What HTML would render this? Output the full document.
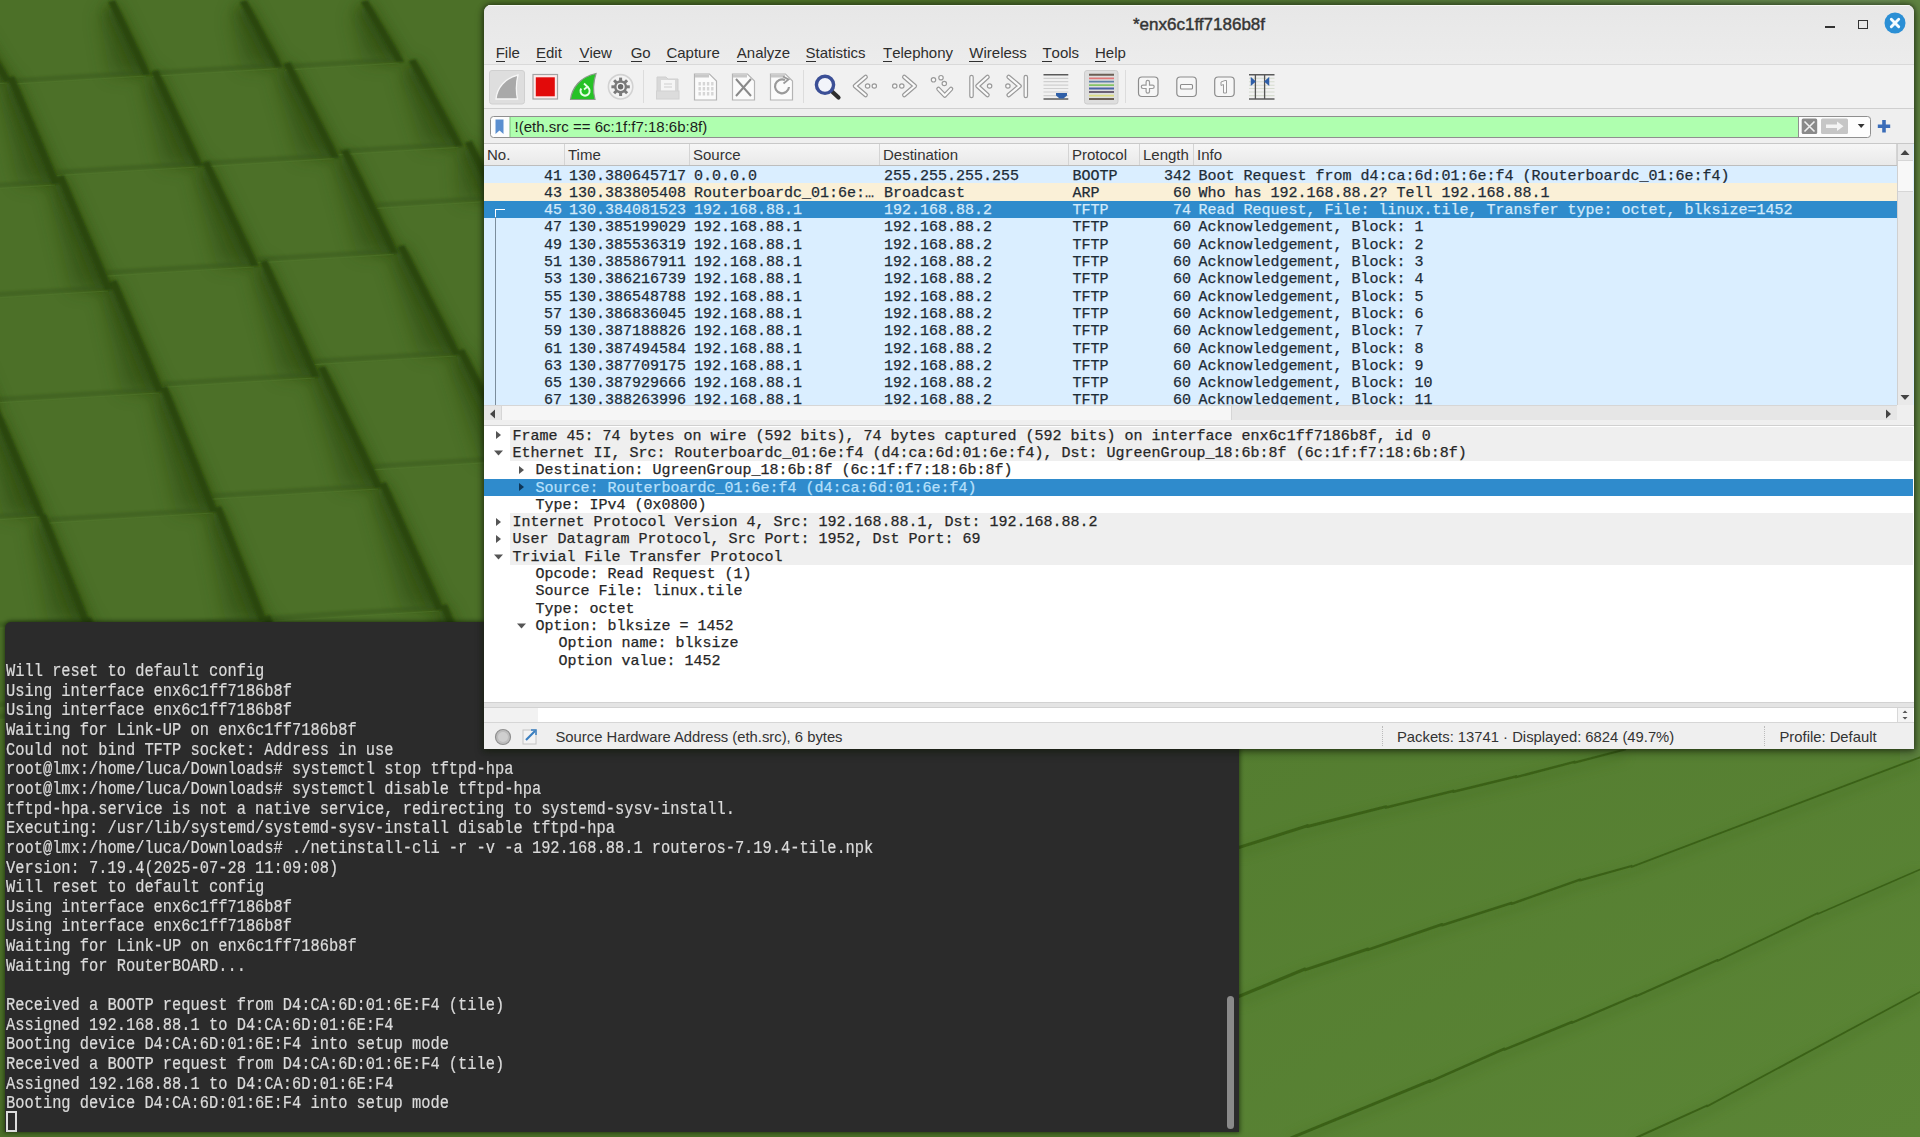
<!DOCTYPE html><html><head><meta charset="utf-8"><style>
*{box-sizing:border-box}
html,body{margin:0;padding:0;width:1920px;height:1137px;overflow:hidden;background:#4f7529;position:relative}
.abs{position:absolute}
.sans{font-family:"Liberation Sans",sans-serif}
.mono{font-family:"Liberation Mono",monospace}
#ws{position:absolute;z-index:5;left:484px;top:5px;width:1430px;height:744px;background:#efefef;border-radius:7px 7px 0 0;box-shadow:0 0 5px 1px rgba(25,32,15,.65),0 4px 10px rgba(10,20,0,.35);overflow:hidden}
#title{position:absolute;left:0;top:0;width:1430px;height:59px;background:linear-gradient(#e7e7e7,#ececec);box-shadow:inset 0 1px #f7f9f5}
#titletext{position:absolute;left:0;width:1430px;top:10px;text-align:center;font:17px "Liberation Sans",sans-serif;color:#353535;-webkit-text-stroke:0.45px #353535}
.menu{position:absolute;top:39px;font:15px "Liberation Sans",sans-serif;color:#2e2e2e;line-height:18px}
.menu u{text-decoration:none;display:inline-block;line-height:17px;border-bottom:1px solid #303030}
#toolbar{position:absolute;left:0;top:59px;width:1430px;height:45px;background:#f1f1f1;box-shadow:inset 0 1px #d9d9d9,inset 0 -1px #cfcfcf}
.tb{position:absolute;top:0}
#filterbar{position:absolute;left:0;top:104px;width:1430px;height:35px;background:#efefef}
#plist{position:absolute;left:0;top:138px;width:1430px;height:277px;background:#daeeff;border-top:1px solid #c8c8c8}
.hdr{position:absolute;top:0;height:22px;background:linear-gradient(#f6f6f6,#e9e9e9);border-bottom:1px solid #bdbdbd;font:15px "Liberation Sans",sans-serif;color:#333}
.hcol{position:absolute;top:0;height:21px;border-right:1px solid #d4d4d4;padding-left:3px;line-height:22px}
.row{position:absolute;left:0;width:1413px;height:17.3px;font:15px "Liberation Mono",monospace;-webkit-text-stroke:0.25px currentColor;color:#1c2a33;white-space:pre;line-height:17.3px}
.row span{position:absolute;top:1.5px}
#detail{position:absolute;left:0;top:420px;width:1430px;height:283px;background:#fff;border-top:1px solid #d0d0d0;box-shadow:0 -5px 0 #efefef}
.drow{position:absolute;left:0;width:1430px;height:17.3px;font:15px "Liberation Mono",monospace;-webkit-text-stroke:0.25px currentColor;color:#222;white-space:pre;line-height:17.3px}
#status{position:absolute;left:0;top:717px;width:1430px;height:27px;background:#efefef;border-top:1px solid #d6d6d6;font:14.8px "Liberation Sans",sans-serif;color:#333}
#term{position:absolute;left:5px;top:622px;width:1234px;height:510px;background:#2b2b2b;border-radius:6px 6px 0 0;box-shadow:0 0 4px 1px rgba(10,25,0,.6);overflow:hidden}
.tl{position:absolute;left:1px;height:19.64px;-webkit-text-stroke:0.2px currentColor;transform:scaleY(1.2);transform-origin:0 15.1px;font:15.39px "Liberation Mono",monospace;color:#dadada;white-space:pre;line-height:19.64px}
</style></head><body>
<svg class="abs" style="left:0;top:0" width="1920" height="1137">
<defs><filter id="bl6" x="-50%" y="-50%" width="200%" height="200%"><feGaussianBlur stdDeviation="6"/></filter><filter id="bl9" x="-50%" y="-50%" width="200%" height="200%"><feGaussianBlur stdDeviation="9"/></filter><filter id="bl2" x="-50%" y="-50%" width="200%" height="200%"><feGaussianBlur stdDeviation="1.2"/></filter><filter id="bl1" x="-50%" y="-50%" width="200%" height="200%"><feGaussianBlur stdDeviation="0.7"/></filter><linearGradient id="gr" x1="0" y1="0" x2="1" y2="1"><stop offset="0" stop-color="#547d30"/><stop offset="1" stop-color="#5b8536"/></linearGradient></defs>
<rect x="0" y="0" width="1920" height="1137" fill="#4c7028"/>
<rect x="1200" y="740" width="720" height="397" fill="url(#gr)"/>
<defs><linearGradient id="tg" x1="0" y1="0" x2="1" y2="0"><stop offset="0" stop-color="#4b6d28"/><stop offset="0.6" stop-color="#55783a"/><stop offset="1" stop-color="#6a8d56"/></linearGradient></defs>
<rect x="900" y="0" width="1020" height="8" fill="url(#tg)"/>
<rect x="1900" y="0" width="20" height="760" fill="#5e8240"/>
<g filter="url(#bl9)" fill="#2b4711" opacity="0.5">
<path d="M366.7 0 L403.3 62 L363.3 62 L352.7 16 Z"/>
<path d="M414.5 59 L462.4 146.4 L422.4 146.4 L400.5 75 Z"/>
<path d="M470.8 140.8 L500 200 L460 200 L456.8 156.8 Z"/>
<path d="M245.6 0 L282.2 67.6 L242.2 67.6 L231.6 16 Z"/>
<path d="M289.3 62 L338.5 157.7 L298.5 157.7 L275.3 78 Z"/>
<path d="M347 149.2 L397.7 253.4 L357.7 253.4 L333 165.2 Z"/>
<path d="M403.3 245 L460 355 L420 355 L389.3 261 Z"/>
<path d="M463 349 L520 460 L480 460 L449 365 Z"/>
<path d="M114 0 L150 75 L110 75 L100 16 Z"/>
<path d="M157 70 L202 166 L162 166 L143 86 Z"/>
<path d="M208 161 L258 266 L218 266 L194 177 Z"/>
<path d="M266 260 L319 377 L279 377 L252 276 Z"/>
<path d="M324 366 L382 488 L342 488 L310 382 Z"/>
<path d="M385 482 L443 610 L403 610 L371 498 Z"/>
<path d="M446 604 L480 690 L440 690 L432 620 Z"/>
<path d="M-20 30 L11 82 L-29 82 L-34 46 Z"/>
<path d="M13 76 L59 184 L19 184 L-1 92 Z"/>
<path d="M62.6 175 L112 290 L72 290 L48.6 191 Z"/>
<path d="M115.4 280 L163 392 L123 392 L101.4 296 Z"/>
<path d="M166 386 L217 512 L177 512 L152 402 Z"/>
<path d="M220 506 L266 621 L226 621 L206 522 Z"/>
<path d="M269 615 L300 690 L260 690 L255 631 Z"/>
<path d="M-30 340 L0 413 L-40 413 L-44 356 Z"/>
<path d="M0 413 L44 516 L4 516 L-14 429 Z"/>
<path d="M45 514 L89 622 L49 622 L31 530 Z"/>
<path d="M90 617 L120 700 L80 700 L76 633 Z"/>
</g>
<g filter="url(#bl6)" fill="#2a4610" opacity="0.75">
<path d="M366.7 4 L403.3 60 L387.3 60 L358.7 10 Z"/>
<path d="M414.5 63 L462.4 144.4 L446.4 144.4 L406.5 69 Z"/>
<path d="M470.8 144.8 L500 198 L484 198 L462.8 150.8 Z"/>
<path d="M245.6 4 L282.2 65.6 L266.2 65.6 L237.6 10 Z"/>
<path d="M289.3 66 L338.5 155.7 L322.5 155.7 L281.3 72 Z"/>
<path d="M347 153.2 L397.7 251.4 L381.7 251.4 L339 159.2 Z"/>
<path d="M403.3 249 L460 353 L444 353 L395.3 255 Z"/>
<path d="M463 353 L520 458 L504 458 L455 359 Z"/>
<path d="M114 4 L150 73 L134 73 L106 10 Z"/>
<path d="M157 74 L202 164 L186 164 L149 80 Z"/>
<path d="M208 165 L258 264 L242 264 L200 171 Z"/>
<path d="M266 264 L319 375 L303 375 L258 270 Z"/>
<path d="M324 370 L382 486 L366 486 L316 376 Z"/>
<path d="M385 486 L443 608 L427 608 L377 492 Z"/>
<path d="M446 608 L480 688 L464 688 L438 614 Z"/>
<path d="M-20 34 L11 80 L-5 80 L-28 40 Z"/>
<path d="M13 80 L59 182 L43 182 L5 86 Z"/>
<path d="M62.6 179 L112 288 L96 288 L54.6 185 Z"/>
<path d="M115.4 284 L163 390 L147 390 L107.4 290 Z"/>
<path d="M166 390 L217 510 L201 510 L158 396 Z"/>
<path d="M220 510 L266 619 L250 619 L212 516 Z"/>
<path d="M269 619 L300 688 L284 688 L261 625 Z"/>
<path d="M-30 344 L0 411 L-16 411 L-38 350 Z"/>
<path d="M0 417 L44 514 L28 514 L-8 423 Z"/>
<path d="M45 518 L89 620 L73 620 L37 524 Z"/>
<path d="M90 621 L120 698 L104 698 L82 627 Z"/>
</g>
<g filter="url(#bl2)" fill="#2e4c13" opacity="0.3">
<path d="M399.3 62 L284.87514792899407 69.1 L284.87514792899407 64.1 L399.3 57 Z"/>
<path d="M458.4 146.4 L338.2611285266458 153.8 L338.2611285266458 148.8 L458.4 141.4 Z"/>
<path d="M496 200 L377.1502879078695 207.4 L377.1502879078695 202.4 L496 195 Z"/>
<path d="M278.2 67.6 L151.848 75.4 L151.848 70.4 L278.2 62.599999999999994 Z"/>
<path d="M334.5 157.7 L203.453125 165.8 L203.453125 160.8 L334.5 152.7 Z"/>
<path d="M393.7 253.4 L257.3809523809524 261.8 L257.3809523809524 256.8 L393.7 248.4 Z"/>
<path d="M456 355 L314.2991452991453 363.7 L314.2991452991453 358.7 L456 350 Z"/>
<path d="M516 460 L374.0655737704918 468.8 L374.0655737704918 463.8 L516 455 Z"/>
<path d="M146 75 L12.80769230769232 83.2 L12.80769230769232 78.2 L146 70 Z"/>
<path d="M198 166 L56.46296296296296 174.7 L56.46296296296296 169.7 L198 161 Z"/>
<path d="M254 266 L106.8382608695652 275.1 L106.8382608695652 270.1 L254 261 Z"/>
<path d="M315 377 L161.75 386.4 L161.75 381.4 L315 372 Z"/>
<path d="M378 488 L212.3095238095238 498.2 L212.3095238095238 493.2 L378 483 Z"/>
<path d="M439 610 L266.6 620.6 L266.6 615.6 L439 605 Z"/>
<path d="M476 690 L-17 719.8 L-17 714.8 L476 685 Z"/>
<path d="M7 82 L-17 83.7 L-17 78.7 L7 77 Z"/>
<path d="M55 184 L-17 188.6 L-17 183.6 L55 179 Z"/>
<path d="M108 290 L-17 297.7 L-17 292.7 L108 285 Z"/>
<path d="M159 392 L-3.5753424657534367 402.0 L-3.5753424657534367 397.0 L159 387 Z"/>
<path d="M213 512 L49.22222222222223 522.1 L49.22222222222223 517.1 L213 507 Z"/>
<path d="M262 621 L96.25301204819277 631.2 L96.25301204819277 626.2 L262 616 Z"/>
<path d="M296 690 L121.19277108433735 700.7 L121.19277108433735 695.7 L296 685 Z"/>
<path d="M-4 413 L-17 414.0 L-17 409.0 L-4 408 Z"/>
<path d="M40 516 L-17 519.7 L-17 514.7 L40 511 Z"/>
<path d="M85 622 L-17 628.4 L-17 623.4 L85 617 Z"/>
<path d="M116 700 L-17 708.2 L-17 703.2 L116 695 Z"/>
</g>
<g filter="url(#bl1)" stroke="#557b31" stroke-width="1.2" fill="none" opacity="0.45">
<path d="M399.3 63 L284.87514792899407 70.1"/>
<path d="M458.4 147.4 L338.2611285266458 154.8"/>
<path d="M496 201 L377.1502879078695 208.4"/>
<path d="M278.2 68.6 L151.848 76.4"/>
<path d="M334.5 158.7 L203.453125 166.8"/>
<path d="M393.7 254.4 L257.3809523809524 262.8"/>
<path d="M456 356 L314.2991452991453 364.7"/>
<path d="M516 461 L374.0655737704918 469.8"/>
<path d="M146 76 L12.80769230769232 84.2"/>
<path d="M198 167 L56.46296296296296 175.7"/>
<path d="M254 267 L106.8382608695652 276.1"/>
<path d="M315 378 L161.75 387.4"/>
<path d="M378 489 L212.3095238095238 499.2"/>
<path d="M439 611 L266.6 621.6"/>
<path d="M476 691 L-17 720.8"/>
<path d="M7 83 L-17 84.7"/>
<path d="M55 185 L-17 189.6"/>
<path d="M108 291 L-17 298.7"/>
<path d="M159 393 L-3.5753424657534367 403.0"/>
<path d="M213 513 L49.22222222222223 523.1"/>
<path d="M262 622 L96.25301204819277 632.2"/>
<path d="M296 691 L121.19277108433735 701.7"/>
<path d="M-4 414 L-17 415.0"/>
<path d="M40 517 L-17 520.7"/>
<path d="M85 623 L-17 629.4"/>
<path d="M116 701 L-17 709.2"/>
</g>
<g filter="url(#bl2)" fill="#294710">
<path d="M367.7 0 L404.3 62 L396.3 62 L360.7 2 Z"/>
<path d="M415.5 59 L463.4 146.4 L455.4 146.4 L408.5 61 Z"/>
<path d="M471.8 140.8 L501 200 L493 200 L464.8 142.8 Z"/>
<path d="M246.6 0 L283.2 67.6 L275.2 67.6 L239.6 2 Z"/>
<path d="M290.3 62 L339.5 157.7 L331.5 157.7 L283.3 64 Z"/>
<path d="M348 149.2 L398.7 253.4 L390.7 253.4 L341 151.2 Z"/>
<path d="M404.3 245 L461 355 L453 355 L397.3 247 Z"/>
<path d="M464 349 L521 460 L513 460 L457 351 Z"/>
<path d="M115 0 L151 75 L143 75 L108 2 Z"/>
<path d="M158 70 L203 166 L195 166 L151 72 Z"/>
<path d="M209 161 L259 266 L251 266 L202 163 Z"/>
<path d="M267 260 L320 377 L312 377 L260 262 Z"/>
<path d="M325 366 L383 488 L375 488 L318 368 Z"/>
<path d="M386 482 L444 610 L436 610 L379 484 Z"/>
<path d="M447 604 L481 690 L473 690 L440 606 Z"/>
<path d="M-19 30 L12 82 L4 82 L-26 32 Z"/>
<path d="M14 76 L60 184 L52 184 L7 78 Z"/>
<path d="M63.6 175 L113 290 L105 290 L56.6 177 Z"/>
<path d="M116.4 280 L164 392 L156 392 L109.4 282 Z"/>
<path d="M167 386 L218 512 L210 512 L160 388 Z"/>
<path d="M221 506 L267 621 L259 621 L214 508 Z"/>
<path d="M270 615 L301 690 L293 690 L263 617 Z"/>
<path d="M-29 340 L1 413 L-7 413 L-36 342 Z"/>
<path d="M1 413 L45 516 L37 516 L-6 415 Z"/>
<path d="M46 514 L90 622 L82 622 L39 516 Z"/>
<path d="M91 617 L121 700 L113 700 L84 619 Z"/>
</g>
<g filter="url(#bl6)" stroke="#3f6a1f" stroke-width="8" fill="none" opacity="0.35">
<polyline points="1238,852 1307.5,830.7 1386,811.7 1453.3,796 1516,781.4 1574.4,766.8 1625,754.5"/>
<polyline points="1238,1001 1305,974 1368,954 1442,929.4 1511.6,908 1580,884.6 1631.6,871 1920,762.3"/>
<polyline points="1291,1142 1430,1085.8 1504.4,1053.8 1572,1027 1636,1000.5 1717.6,965 1817.7,918.2 1920,874.5"/>
<polyline points="1636,1142 1707,1110.6 1920,997"/>
</g>
<g filter="url(#bl1)" stroke="#3a6118" fill="none" stroke-linecap="round">
<path d="M1238 847.8 L1307.5 825.7" stroke-width="3.11"/>
<path d="M1307.5 826.5 L1386 806.7" stroke-width="2.93"/>
<path d="M1386 807.5 L1453.3 791" stroke-width="2.75"/>
<path d="M1453.3 791.8 L1516 776.4" stroke-width="2.59"/>
<path d="M1516 777.1999999999999 L1574.4 761.8" stroke-width="2.43"/>
<path d="M1574.4 762.5999999999999 L1625 749.5" stroke-width="2.30"/>
<path d="M1238 996.8 L1305 969" stroke-width="3.12"/>
<path d="M1305 969.8 L1368 949" stroke-width="2.95"/>
<path d="M1368 949.8 L1442 924.4" stroke-width="2.78"/>
<path d="M1442 925.1999999999999 L1511.6 903" stroke-width="2.60"/>
<path d="M1511.6 903.8 L1580 879.6" stroke-width="2.43"/>
<path d="M1580 880.4 L1631.6 866" stroke-width="2.28"/>
<path d="M1631.6 866.8 L1920 757.3" stroke-width="1.86"/>
<path d="M1291 1137.8 L1430 1080.8" stroke-width="2.89"/>
<path d="M1430 1081.6 L1504.4 1048.8" stroke-width="2.63"/>
<path d="M1504.4 1049.6 L1572 1022" stroke-width="2.45"/>
<path d="M1572 1022.8 L1636 995.5" stroke-width="2.29"/>
<path d="M1636 996.3 L1717.6 960" stroke-width="2.11"/>
<path d="M1717.6 960.8 L1817.7 913.2" stroke-width="1.88"/>
<path d="M1817.7 914.0 L1920 869.5" stroke-width="1.63"/>
<path d="M1636 1137.8 L1707 1105.6" stroke-width="2.12"/>
<path d="M1707 1106.3999999999999 L1920 992" stroke-width="1.77"/>
</g>
</svg>
<div id="ws">
<div id="title"><div id="titletext">*enx6c1ff7186b8f</div>
<div class="abs" style="left:1341px;top:21px;width:10px;height:2px;background:#333"></div>
<div class="abs" style="left:1374px;top:14.5px;width:9.5px;height:9.5px;border:1.8px solid #333"></div>
<svg class="abs" style="left:1400px;top:7px" width="22" height="22"><circle cx="11" cy="11" r="10.5" fill="#2b8fd5"/><path d="M7.3 7.3L14.7 14.7M14.7 7.3L7.3 14.7" stroke="#f4fbff" stroke-width="2.9" stroke-linecap="round"/></svg>
<div class="menu" style="left:11.7px"><u>F</u>ile</div>
<div class="menu" style="left:52.0px"><u>E</u>dit</div>
<div class="menu" style="left:95.4px"><u>V</u>iew</div>
<div class="menu" style="left:146.7px"><u>G</u>o</div>
<div class="menu" style="left:182.4px"><u>C</u>apture</div>
<div class="menu" style="left:252.8px"><u>A</u>nalyze</div>
<div class="menu" style="left:321.5px"><u>S</u>tatistics</div>
<div class="menu" style="left:399.0px"><u>T</u>elephony</div>
<div class="menu" style="left:485.3px"><u>W</u>ireless</div>
<div class="menu" style="left:558.4px"><u>T</u>ools</div>
<div class="menu" style="left:611.0px"><u>H</u>elp</div>
</div>
<div id="toolbar"><svg class="abs" style="left:0;top:0" width="1430" height="45"><g transform="translate(-484,-64)">
<rect x="489.5" y="70.5" width="35" height="33.5" rx="2.5" fill="#dedede" stroke="#d0d0d0"/>
<path d="M496 99 C497 88 505 78 518 75 C516 83 516 92 517.5 99 Z" fill="#a9a9a9" stroke="#f6f6f6" stroke-width="1.3"/>
<rect x="533" y="74.5" width="24.5" height="24.5" fill="#fbeaea" stroke="#a3a3a3" stroke-width="1.2"/>
<rect x="535.8" y="77.3" width="19" height="19" fill="#e20a0a"/>
<path d="M570.5 99.5 C572 88 580 77 596 73.5 C593 83 593 92 595 99.5 Z" fill="#26c226" stroke="#8a9a8a" stroke-width="1.2"/>
<path d="M581.2 88.5 A4.6 4.6 0 1 0 586 86.5" fill="none" stroke="#e8ffe8" stroke-width="2"/>
<path d="M584 83.5 L587.5 86.8 L584 89.5" fill="none" stroke="#e8ffe8" stroke-width="1.8"/>
<circle cx="620.6" cy="86.8" r="12.2" fill="#f3f3f3" stroke="#d2d2d2" stroke-width="1.6"/>
<rect x="619.1" y="77.6" width="3" height="4" fill="#7a7a7a" transform="rotate(0 620.6 86.8)"/>
<rect x="619.1" y="77.6" width="3" height="4" fill="#7a7a7a" transform="rotate(45 620.6 86.8)"/>
<rect x="619.1" y="77.6" width="3" height="4" fill="#7a7a7a" transform="rotate(90 620.6 86.8)"/>
<rect x="619.1" y="77.6" width="3" height="4" fill="#7a7a7a" transform="rotate(135 620.6 86.8)"/>
<rect x="619.1" y="77.6" width="3" height="4" fill="#7a7a7a" transform="rotate(180 620.6 86.8)"/>
<rect x="619.1" y="77.6" width="3" height="4" fill="#7a7a7a" transform="rotate(225 620.6 86.8)"/>
<rect x="619.1" y="77.6" width="3" height="4" fill="#7a7a7a" transform="rotate(270 620.6 86.8)"/>
<rect x="619.1" y="77.6" width="3" height="4" fill="#7a7a7a" transform="rotate(315 620.6 86.8)"/>
<circle cx="620.6" cy="86.8" r="6.6" fill="#7a7a7a"/>
<circle cx="620.6" cy="86.8" r="4.1" fill="#f3f3f3"/>
<circle cx="620.6" cy="86.8" r="2.7" fill="#6a6a6a"/>
<line x1="643.5" y1="70" x2="643.5" y2="103" stroke="#dcdcdc" stroke-width="1"/>
<line x1="803.5" y1="70" x2="803.5" y2="103" stroke="#dcdcdc" stroke-width="1"/>
<line x1="1125.5" y1="70" x2="1125.5" y2="103" stroke="#dcdcdc" stroke-width="1"/>
<path d="M657 77 L666 77 L668 79 L678 79 L678 98 L657 98 Z" fill="#d8d8d8" stroke="#cfcfcf"/>
<rect x="661" y="80" width="14" height="11" fill="#f5f5f5"/>
<line x1="664" y1="84" x2="672" y2="84" stroke="#cfcfcf" stroke-width="1.2"/><line x1="664" y1="87" x2="672" y2="87" stroke="#cfcfcf" stroke-width="1.2"/>
<rect x="656.5" y="91" width="22.5" height="8" fill="#dcdcdc" stroke="#d2d2d2"/>
<path d="M694.5 74 L709.5 74 L716.5 81 L716.5 100 L694.5 100 Z" fill="#fbfbfb" stroke="#b4b4b4" stroke-width="1.2"/><rect x="695" y="74.5" width="14" height="3" fill="#c8c8c8"/>
<rect x="698.5" y="82" width="2.4" height="3.5" fill="#d6d6d6"/>
<rect x="698.5" y="87" width="2.4" height="3.5" fill="#d6d6d6"/>
<rect x="698.5" y="92" width="2.4" height="3.5" fill="#d6d6d6"/>
<rect x="702.7" y="82" width="2.4" height="3.5" fill="#d6d6d6"/>
<rect x="702.7" y="87" width="2.4" height="3.5" fill="#d6d6d6"/>
<rect x="702.7" y="92" width="2.4" height="3.5" fill="#d6d6d6"/>
<rect x="706.9" y="82" width="2.4" height="3.5" fill="#d6d6d6"/>
<rect x="706.9" y="87" width="2.4" height="3.5" fill="#d6d6d6"/>
<rect x="706.9" y="92" width="2.4" height="3.5" fill="#d6d6d6"/>
<rect x="711.1" y="82" width="2.4" height="3.5" fill="#d6d6d6"/>
<rect x="711.1" y="87" width="2.4" height="3.5" fill="#d6d6d6"/>
<rect x="711.1" y="92" width="2.4" height="3.5" fill="#d6d6d6"/>
<path d="M732.5 74 L747.5 74 L754.5 81 L754.5 100 L732.5 100 Z" fill="#fbfbfb" stroke="#b4b4b4" stroke-width="1.2"/><rect x="733" y="74.5" width="14" height="3" fill="#c8c8c8"/>
<path d="M736 79 L751 96 M751 79 L736 96" stroke="#8a8a8a" stroke-width="2"/>
<path d="M770.5 74 L785.5 74 L792.5 81 L792.5 100 L770.5 100 Z" fill="#fbfbfb" stroke="#b4b4b4" stroke-width="1.2"/><rect x="771" y="74.5" width="14" height="3" fill="#c8c8c8"/>
<path d="M789 87 A7 7 0 1 1 785 80" fill="none" stroke="#9a9a9a" stroke-width="2.2"/>
<path d="M783 76.5 L788.5 79.5 L783.5 83.5" fill="none" stroke="#9a9a9a" stroke-width="1.8"/>
<line x1="832" y1="91.5" x2="838.5" y2="97.5" stroke="#2e2e2e" stroke-width="4.2" stroke-linecap="round"/>
<circle cx="825" cy="84.8" r="8.6" fill="#f2f4fa" stroke="#3b4f96" stroke-width="3.4"/>
<path d="M865.6 77 L855 86 L865.6 95" fill="none" stroke="#9a9a9a" stroke-width="4.6" stroke-linecap="round" stroke-linejoin="round"/><path d="M865.6 77 L855 86 L865.6 95" fill="none" stroke="#fafafa" stroke-width="2.2" stroke-linecap="round" stroke-linejoin="round"/><circle cx="867.6" cy="86" r="2.2" fill="#fafafa" stroke="#9a9a9a" stroke-width="1.2"/><circle cx="874.3" cy="86" r="2.2" fill="#fafafa" stroke="#9a9a9a" stroke-width="1.2"/>
<path d="M904.3 77 L914.8 86 L904.3 95" fill="none" stroke="#9a9a9a" stroke-width="4.6" stroke-linecap="round" stroke-linejoin="round"/><path d="M904.3 77 L914.8 86 L904.3 95" fill="none" stroke="#fafafa" stroke-width="2.2" stroke-linecap="round" stroke-linejoin="round"/><circle cx="894.75" cy="86" r="2.2" fill="#fafafa" stroke="#9a9a9a" stroke-width="1.2"/><circle cx="901.8" cy="86" r="2.2" fill="#fafafa" stroke="#9a9a9a" stroke-width="1.2"/>
<circle cx="933.5" cy="79.8" r="2.2" fill="#fafafa" stroke="#9a9a9a" stroke-width="1.2"/><circle cx="941" cy="77.7" r="2.2" fill="#fafafa" stroke="#9a9a9a" stroke-width="1.2"/><circle cx="944.3" cy="83.5" r="2.2" fill="#fafafa" stroke="#9a9a9a" stroke-width="1.2"/><path d="M938.5 89 L944.75 95.5 L951 89" fill="none" stroke="#9a9a9a" stroke-width="4.6" stroke-linecap="round" stroke-linejoin="round"/><path d="M938.5 89 L944.75 95.5 L951 89" fill="none" stroke="#fafafa" stroke-width="2.2" stroke-linecap="round" stroke-linejoin="round"/>
<path d="M971.5 77 L971.5 96" fill="none" stroke="#9a9a9a" stroke-width="4.6" stroke-linecap="round" stroke-linejoin="round"/><path d="M971.5 77 L971.5 96" fill="none" stroke="#fafafa" stroke-width="2.2" stroke-linecap="round" stroke-linejoin="round"/><path d="M987.5 77 L977.5 86 L987.5 95" fill="none" stroke="#9a9a9a" stroke-width="4.6" stroke-linecap="round" stroke-linejoin="round"/><path d="M987.5 77 L977.5 86 L987.5 95" fill="none" stroke="#fafafa" stroke-width="2.2" stroke-linecap="round" stroke-linejoin="round"/><circle cx="989.6" cy="86" r="2.2" fill="#fafafa" stroke="#9a9a9a" stroke-width="1.2"/>
<path d="M1008.75 77 L1019.5 86 L1008.75 95" fill="none" stroke="#9a9a9a" stroke-width="4.6" stroke-linecap="round" stroke-linejoin="round"/><path d="M1008.75 77 L1019.5 86 L1008.75 95" fill="none" stroke="#fafafa" stroke-width="2.2" stroke-linecap="round" stroke-linejoin="round"/><path d="M1025.8 77 L1025.8 96" fill="none" stroke="#9a9a9a" stroke-width="4.6" stroke-linecap="round" stroke-linejoin="round"/><path d="M1025.8 77 L1025.8 96" fill="none" stroke="#fafafa" stroke-width="2.2" stroke-linecap="round" stroke-linejoin="round"/><circle cx="1007.9" cy="86" r="2.2" fill="#fafafa" stroke="#9a9a9a" stroke-width="1.2"/>
<line x1="1043.5" y1="74.75" x2="1068.3" y2="74.75" stroke="#5a5a5a" stroke-width="1.6"/>
<line x1="1043.5" y1="78.3" x2="1068.3" y2="78.3" stroke="#cfcfcf" stroke-width="1.2"/>
<line x1="1043.5" y1="81.7" x2="1068.3" y2="81.7" stroke="#cfcfcf" stroke-width="1.2"/>
<line x1="1043.5" y1="85.2" x2="1068.3" y2="85.2" stroke="#cfcfcf" stroke-width="1.2"/>
<line x1="1043.5" y1="88.5" x2="1068.3" y2="88.5" stroke="#cfcfcf" stroke-width="1.2"/>
<line x1="1043.5" y1="92" x2="1068.3" y2="92" stroke="#cfcfcf" stroke-width="1.2"/>
<line x1="1043.5" y1="95.6" x2="1068.3" y2="95.6" stroke="#cfcfcf" stroke-width="1.2"/>
<line x1="1043.5" y1="99" x2="1068.3" y2="99" stroke="#5a5a5a" stroke-width="1.6"/>
<path d="M1056 93 L1067 93 L1067 95.5 L1063.5 98.5 L1059.5 98.5 L1056 95.5 Z" fill="#2f5fa8"/>
<rect x="1084.5" y="70.5" width="33.5" height="33.5" rx="2.5" fill="#dedede" stroke="#cdcdcd"/>
<line x1="1089" y1="74.75" x2="1114" y2="74.75" stroke="#6b5f55" stroke-width="1.8"/>
<line x1="1089" y1="78.3" x2="1114" y2="78.3" stroke="#e07878" stroke-width="1.8"/>
<line x1="1089" y1="81.7" x2="1114" y2="81.7" stroke="#5f80a8" stroke-width="1.8"/>
<line x1="1089" y1="85.2" x2="1114" y2="85.2" stroke="#86c466" stroke-width="1.8"/>
<line x1="1089" y1="88.5" x2="1114" y2="88.5" stroke="#4a62a6" stroke-width="1.8"/>
<line x1="1089" y1="92" x2="1114" y2="92" stroke="#6b6072" stroke-width="1.8"/>
<line x1="1089" y1="95.6" x2="1114" y2="95.6" stroke="#dcdc80" stroke-width="1.8"/>
<line x1="1089" y1="99" x2="1114" y2="99" stroke="#6b5f55" stroke-width="1.8"/>
<rect x="1138.5" y="77" width="19.5" height="19.5" rx="3.5" fill="#f6f6f6" stroke="#8c8c8c" stroke-width="1.2"/>
<path d="M1147.8 82 L1147.8 91.5 M1143 86.8 L1152.5 86.8" fill="none" stroke="#9a9a9a" stroke-width="4.6" stroke-linecap="round" stroke-linejoin="round"/><path d="M1147.8 82 L1147.8 91.5 M1143 86.8 L1152.5 86.8" fill="none" stroke="#fafafa" stroke-width="2.2" stroke-linecap="round" stroke-linejoin="round"/>
<rect x="1176.8" y="77" width="19.5" height="19.5" rx="3.5" fill="#f6f6f6" stroke="#8c8c8c" stroke-width="1.2"/>
<rect x="1180.5" y="84.5" width="12" height="4.5" rx="1" fill="#fafafa" stroke="#8c8c8c" stroke-width="1.1"/>
<rect x="1214.7" y="77" width="19.5" height="19.5" rx="3.5" fill="#f6f6f6" stroke="#8c8c8c" stroke-width="1.2"/>
<path d="M1221 82 L1225 80.5 L1226.5 80.5 L1226.5 93 L1223.5 93 L1223.5 84.5 L1221 85.5 Z" fill="#fafafa" stroke="#9a9a9a" stroke-width="1"/>
<line x1="1249" y1="74.75" x2="1274.5" y2="74.75" stroke="#5a5a5a" stroke-width="1.6"/>
<line x1="1249" y1="78.3" x2="1274.5" y2="78.3" stroke="#d6dccf" stroke-width="1.1"/>
<line x1="1249" y1="81.7" x2="1274.5" y2="81.7" stroke="#d6dccf" stroke-width="1.1"/>
<line x1="1249" y1="85.2" x2="1274.5" y2="85.2" stroke="#d6dccf" stroke-width="1.1"/>
<line x1="1249" y1="88.5" x2="1274.5" y2="88.5" stroke="#d6dccf" stroke-width="1.1"/>
<line x1="1249" y1="92" x2="1274.5" y2="92" stroke="#d6dccf" stroke-width="1.1"/>
<line x1="1249" y1="95.6" x2="1274.5" y2="95.6" stroke="#d6dccf" stroke-width="1.1"/>
<line x1="1249" y1="99" x2="1274.5" y2="99" stroke="#5a5a5a" stroke-width="1.6"/>
<line x1="1255.4" y1="75" x2="1255.4" y2="99" stroke="#555" stroke-width="1.3"/><line x1="1264.6" y1="75" x2="1264.6" y2="99" stroke="#555" stroke-width="1.3"/>
<path d="M1251.5 78.5 L1254.8 81.4 L1251.5 84.3 Z M1268.5 78.5 L1265.2 81.4 L1268.5 84.3 Z" fill="#2f5fa8" stroke="#2f5fa8" stroke-width="1.5"/>
</g></svg></div>
<div id="filterbar"><svg class="abs" style="left:0;top:0" width="1430" height="35"><g transform="translate(-484,-109)">
<rect x="490.5" y="116.5" width="1380" height="21" rx="3" fill="#fdfdfd" stroke="#8f8f8f"/>
<rect x="510" y="117" width="1288.5" height="20" fill="#afffaf"/>
<line x1="510" y1="117" x2="510" y2="137" stroke="#7fbf7f"/>
<line x1="1798.5" y1="117" x2="1798.5" y2="137" stroke="#8f8f8f"/>
<path d="M495.5 119.5 L503.5 119.5 L503.5 134 L499.5 130.5 L495.5 134 Z" fill="#5b8fd0"/>
<rect x="1801.7" y="118.6" width="15.5" height="15.4" rx="1.5" fill="#8a8a8a"/>
<path d="M1804.5 121.5 L1814.5 131.5 M1814.5 121.5 L1804.5 131.5" stroke="#f0f0f0" stroke-width="1.6"/>
<rect x="1821" y="118.6" width="27" height="15.4" rx="1.5" fill="#c6c6c6"/>
<path d="M1826 124.5 L1837 124.5 L1837 121.5 L1843.5 126.3 L1837 131 L1837 128 L1826 128 Z" fill="#f4f4f4"/>
<path d="M1857.8 124 L1864.6 124 L1861.2 128 Z" fill="#333"/>
<path d="M1884 120 L1884 132.5 M1877.8 126.2 L1890.2 126.2" stroke="#3a6cb8" stroke-width="3.6"/>
</g></svg>
<div class="abs" style="left:30.6px;top:8.5px;font:15px 'Liberation Sans',sans-serif;color:#1c1c1c;white-space:nowrap">!(eth.src == 6c:1f:f7:18:6b:8f)</div></div>
<div id="plist"><div class="hdr" style="left:0;width:1413px">
<div class="hcol" style="left:0px;width:81px">No.</div>
<div class="hcol" style="left:81px;width:125px">Time</div>
<div class="hcol" style="left:206px;width:190px">Source</div>
<div class="hcol" style="left:396px;width:189px">Destination</div>
<div class="hcol" style="left:585px;width:71px">Protocol</div>
<div class="hcol" style="left:656px;width:54px">Length</div>
<div class="hcol" style="left:710px;width:703px">Info</div>
</div>
<div class="row" style="top:22.00px;background:#daeeff;color:#1d2b36">
<span style="right:1335px">41</span>
<span style="left:85px">130.380645717</span>
<span style="left:210px">0.0.0.0</span>
<span style="left:400px">255.255.255.255</span>
<span style="left:588.5px">BOOTP</span>
<span style="right:706px">342</span>
<span style="left:714.5px">Boot Request from d4:ca:6d:01:6e:f4 (Routerboardc_01:6e:f4)</span>
</div>
<div class="row" style="top:39.30px;background:#faf0d7;color:#1d2b36">
<span style="right:1335px">43</span>
<span style="left:85px">130.383805408</span>
<span style="left:210px">Routerboardc_01:6e:…</span>
<span style="left:400px">Broadcast</span>
<span style="left:588.5px">ARP</span>
<span style="right:706px">60</span>
<span style="left:714.5px">Who has 192.168.88.2? Tell 192.168.88.1</span>
</div>
<div class="row" style="top:56.60px;background:#2f8bcc;color:#d2eafb">
<span style="right:1335px">45</span>
<span style="left:85px">130.384081523</span>
<span style="left:210px">192.168.88.1</span>
<span style="left:400px">192.168.88.2</span>
<span style="left:588.5px">TFTP</span>
<span style="right:706px">74</span>
<span style="left:714.5px">Read Request, File: linux.tile, Transfer type: octet, blksize=1452</span>
</div>
<div class="row" style="top:73.90px;background:#daeeff;color:#1d2b36">
<span style="right:1335px">47</span>
<span style="left:85px">130.385199029</span>
<span style="left:210px">192.168.88.1</span>
<span style="left:400px">192.168.88.2</span>
<span style="left:588.5px">TFTP</span>
<span style="right:706px">60</span>
<span style="left:714.5px">Acknowledgement, Block: 1</span>
</div>
<div class="row" style="top:91.20px;background:#daeeff;color:#1d2b36">
<span style="right:1335px">49</span>
<span style="left:85px">130.385536319</span>
<span style="left:210px">192.168.88.1</span>
<span style="left:400px">192.168.88.2</span>
<span style="left:588.5px">TFTP</span>
<span style="right:706px">60</span>
<span style="left:714.5px">Acknowledgement, Block: 2</span>
</div>
<div class="row" style="top:108.50px;background:#daeeff;color:#1d2b36">
<span style="right:1335px">51</span>
<span style="left:85px">130.385867911</span>
<span style="left:210px">192.168.88.1</span>
<span style="left:400px">192.168.88.2</span>
<span style="left:588.5px">TFTP</span>
<span style="right:706px">60</span>
<span style="left:714.5px">Acknowledgement, Block: 3</span>
</div>
<div class="row" style="top:125.80px;background:#daeeff;color:#1d2b36">
<span style="right:1335px">53</span>
<span style="left:85px">130.386216739</span>
<span style="left:210px">192.168.88.1</span>
<span style="left:400px">192.168.88.2</span>
<span style="left:588.5px">TFTP</span>
<span style="right:706px">60</span>
<span style="left:714.5px">Acknowledgement, Block: 4</span>
</div>
<div class="row" style="top:143.10px;background:#daeeff;color:#1d2b36">
<span style="right:1335px">55</span>
<span style="left:85px">130.386548788</span>
<span style="left:210px">192.168.88.1</span>
<span style="left:400px">192.168.88.2</span>
<span style="left:588.5px">TFTP</span>
<span style="right:706px">60</span>
<span style="left:714.5px">Acknowledgement, Block: 5</span>
</div>
<div class="row" style="top:160.40px;background:#daeeff;color:#1d2b36">
<span style="right:1335px">57</span>
<span style="left:85px">130.386836045</span>
<span style="left:210px">192.168.88.1</span>
<span style="left:400px">192.168.88.2</span>
<span style="left:588.5px">TFTP</span>
<span style="right:706px">60</span>
<span style="left:714.5px">Acknowledgement, Block: 6</span>
</div>
<div class="row" style="top:177.70px;background:#daeeff;color:#1d2b36">
<span style="right:1335px">59</span>
<span style="left:85px">130.387188826</span>
<span style="left:210px">192.168.88.1</span>
<span style="left:400px">192.168.88.2</span>
<span style="left:588.5px">TFTP</span>
<span style="right:706px">60</span>
<span style="left:714.5px">Acknowledgement, Block: 7</span>
</div>
<div class="row" style="top:195.00px;background:#daeeff;color:#1d2b36">
<span style="right:1335px">61</span>
<span style="left:85px">130.387494584</span>
<span style="left:210px">192.168.88.1</span>
<span style="left:400px">192.168.88.2</span>
<span style="left:588.5px">TFTP</span>
<span style="right:706px">60</span>
<span style="left:714.5px">Acknowledgement, Block: 8</span>
</div>
<div class="row" style="top:212.30px;background:#daeeff;color:#1d2b36">
<span style="right:1335px">63</span>
<span style="left:85px">130.387709175</span>
<span style="left:210px">192.168.88.1</span>
<span style="left:400px">192.168.88.2</span>
<span style="left:588.5px">TFTP</span>
<span style="right:706px">60</span>
<span style="left:714.5px">Acknowledgement, Block: 9</span>
</div>
<div class="row" style="top:229.60px;background:#daeeff;color:#1d2b36">
<span style="right:1335px">65</span>
<span style="left:85px">130.387929666</span>
<span style="left:210px">192.168.88.1</span>
<span style="left:400px">192.168.88.2</span>
<span style="left:588.5px">TFTP</span>
<span style="right:706px">60</span>
<span style="left:714.5px">Acknowledgement, Block: 10</span>
</div>
<div class="row" style="top:246.90px;background:#daeeff;color:#1d2b36">
<span style="right:1335px">67</span>
<span style="left:85px">130.388263996</span>
<span style="left:210px">192.168.88.1</span>
<span style="left:400px">192.168.88.2</span>
<span style="left:588.5px">TFTP</span>
<span style="right:706px">60</span>
<span style="left:714.5px">Acknowledgement, Block: 11</span>
</div>
<div class="abs" style="left:11px;top:65px;width:10px;height:1px;background:#fff"></div>
<div class="abs" style="left:11px;top:65px;width:1px;height:8px;background:#fff"></div>
<div class="abs" style="left:11px;top:73px;width:1px;height:188px;background:#7b8d9c"></div>
<div class="abs" style="left:1413px;top:0;width:16px;height:261px;background:#e9e9e9;border-left:1px solid #d0d0d0"></div>
<div class="abs" style="left:1414px;top:16px;width:15px;height:32px;background:#f8f8f8;border-top:1px solid #d6d6d6;border-bottom:1px solid #d6d6d6"></div>
<svg class="abs" style="left:1416px;top:5px" width="10" height="7"><path d="M0.5 6L5 1L9.5 6Z" fill="#444"/></svg>
<svg class="abs" style="left:1416px;top:250px" width="10" height="7"><path d="M0.5 1L5 6L9.5 1Z" fill="#444"/></svg>
<div class="abs" style="left:0;top:261px;width:1413px;height:16px;background:#e6e6e6;border-top:1px solid #d6d6d6"></div>
<div class="abs" style="left:17px;top:262px;width:731px;height:15px;background:#f6f6f6;border-left:1px solid #d6d6d6;border-right:1px solid #d6d6d6"></div>
<svg class="abs" style="left:5px;top:265px" width="7" height="10"><path d="M6 0.5L1 5L6 9.5Z" fill="#444"/></svg>
<svg class="abs" style="left:1401px;top:265px" width="7" height="10"><path d="M1 0.5L6 5L1 9.5Z" fill="#444"/></svg>
<div class="abs" style="left:1413px;top:261px;width:17px;height:16px;background:#efefef"></div></div>
<div id="detail"><div class="drow" style="top:0.60px;left:26px;width:1403px;background:#efefef;color:#262626">
<span class="abs" style="left:2.5px;top:1px">Frame 45: 74 bytes on wire (592 bits), 74 bytes captured (592 bits) on interface enx6c1ff7186b8f, id 0</span>
<svg class="abs" style="left:-15.5px;top:3.5px" width="8" height="10"><path d="M1 1L6 5L1 9Z" fill="#555"/></svg>
</div>
<div class="drow" style="top:17.90px;left:26px;width:1403px;background:#efefef;color:#262626">
<span class="abs" style="left:2.5px;top:1px">Ethernet II, Src: Routerboardc_01:6e:f4 (d4:ca:6d:01:6e:f4), Dst: UgreenGroup_18:6b:8f (6c:1f:f7:18:6b:8f)</span>
<svg class="abs" style="left:-17.5px;top:5px" width="11" height="8"><path d="M1 1.5L10 1.5L5.5 6.5Z" fill="#555"/></svg>
</div>
<div class="drow" style="top:35.20px;left:26px;width:1403px;background:#ffffff;color:#262626">
<span class="abs" style="left:25.5px;top:1px">Destination: UgreenGroup_18:6b:8f (6c:1f:f7:18:6b:8f)</span>
<svg class="abs" style="left:7.5px;top:3.5px" width="8" height="10"><path d="M1 1L6 5L1 9Z" fill="#555"/></svg>
</div>
<div class="drow" style="top:52.50px;left:0px;width:1429px;background:#2f8bcc;color:#b9e0fb">
<span class="abs" style="left:51.5px;top:1px">Source: Routerboardc_01:6e:f4 (d4:ca:6d:01:6e:f4)</span>
<svg class="abs" style="left:33.5px;top:3.5px" width="8" height="10"><path d="M1 1L6 5L1 9Z" fill="#0e3556"/></svg>
</div>
<div class="drow" style="top:69.80px;left:26px;width:1403px;background:#ffffff;color:#262626">
<span class="abs" style="left:25.5px;top:1px">Type: IPv4 (0x0800)</span>
</div>
<div class="drow" style="top:87.10px;left:26px;width:1403px;background:#efefef;color:#262626">
<span class="abs" style="left:2.5px;top:1px">Internet Protocol Version 4, Src: 192.168.88.1, Dst: 192.168.88.2</span>
<svg class="abs" style="left:-15.5px;top:3.5px" width="8" height="10"><path d="M1 1L6 5L1 9Z" fill="#555"/></svg>
</div>
<div class="drow" style="top:104.40px;left:26px;width:1403px;background:#efefef;color:#262626">
<span class="abs" style="left:2.5px;top:1px">User Datagram Protocol, Src Port: 1952, Dst Port: 69</span>
<svg class="abs" style="left:-15.5px;top:3.5px" width="8" height="10"><path d="M1 1L6 5L1 9Z" fill="#555"/></svg>
</div>
<div class="drow" style="top:121.70px;left:26px;width:1403px;background:#efefef;color:#262626">
<span class="abs" style="left:2.5px;top:1px">Trivial File Transfer Protocol</span>
<svg class="abs" style="left:-17.5px;top:5px" width="11" height="8"><path d="M1 1.5L10 1.5L5.5 6.5Z" fill="#555"/></svg>
</div>
<div class="drow" style="top:139.00px;left:26px;width:1403px;background:#ffffff;color:#262626">
<span class="abs" style="left:25.5px;top:1px">Opcode: Read Request (1)</span>
</div>
<div class="drow" style="top:156.30px;left:26px;width:1403px;background:#ffffff;color:#262626">
<span class="abs" style="left:25.5px;top:1px">Source File: linux.tile</span>
</div>
<div class="drow" style="top:173.60px;left:26px;width:1403px;background:#ffffff;color:#262626">
<span class="abs" style="left:25.5px;top:1px">Type: octet</span>
</div>
<div class="drow" style="top:190.90px;left:26px;width:1403px;background:#ffffff;color:#262626">
<span class="abs" style="left:25.5px;top:1px">Option: blksize = 1452</span>
<svg class="abs" style="left:5.5px;top:5px" width="11" height="8"><path d="M1 1.5L10 1.5L5.5 6.5Z" fill="#555"/></svg>
</div>
<div class="drow" style="top:208.20px;left:26px;width:1403px;background:#ffffff;color:#262626">
<span class="abs" style="left:48.5px;top:1px">Option name: blksize</span>
</div>
<div class="drow" style="top:225.50px;left:26px;width:1403px;background:#ffffff;color:#262626">
<span class="abs" style="left:48.5px;top:1px">Option value: 1452</span>
</div>
<div class="abs" style="left:0;top:276px;width:1430px;height:5px;background:#e4e4e4;border-top:1px solid #d2d2d2"></div>
<div class="abs" style="left:0;top:281px;width:1430px;height:16px;background:#fff;border-top:1px solid #d2d2d2;border-bottom:1px solid #d2d2d2"></div>
<div class="abs" style="left:0;top:282px;width:54px;height:14px;background:#f2f2f2"></div>
<div class="abs" style="left:1413px;top:282px;width:16px;height:14px;background:#f4f4f4;border-left:1px solid #d8d8d8"></div>
<svg class="abs" style="left:1417px;top:283px" width="8" height="12"><path d="M1.5 4L4 1.5L6.5 4Z M1.5 8L4 10.5L6.5 8Z" fill="#555"/></svg></div>
<div id="status"><svg class="abs" style="left:10px;top:5px" width="18" height="18"><circle cx="9" cy="9" r="7.5" fill="#bdbdbd" stroke="#8f8f8f" stroke-width="1.2"/><circle cx="9" cy="9" r="5" fill="#cfcfcf"/></svg>
<svg class="abs" style="left:38px;top:4px" width="16" height="18"><rect x="1" y="3" width="13" height="14" fill="#f3f3f3" stroke="#c4c4c4"/><path d="M4 13L13 4" stroke="#3a7fc0" stroke-width="2.2"/><path d="M9 3L14 3L14 8" stroke="#3a7fc0" stroke-width="1.5" fill="none"/></svg>
<div class="abs" style="left:71.5px;top:6px;white-space:nowrap">Source Hardware Address (eth.src), 6 bytes</div>
<div class="abs" style="left:898px;top:3px;width:1px;height:20px;border-left:1px dotted #bbb"></div>
<div class="abs" style="left:913px;top:6px;white-space:nowrap">Packets: 13741 · Displayed: 6824 (49.7%)</div>
<div class="abs" style="left:1280px;top:3px;width:1px;height:20px;border-left:1px dotted #bbb"></div>
<div class="abs" style="left:1295.5px;top:6px;white-space:nowrap">Profile: Default</div></div>
</div>
<div id="term"><div class="tl" style="top:41.10px">Will reset to default config</div>
<div class="tl" style="top:60.74px">Using interface enx6c1ff7186b8f</div>
<div class="tl" style="top:80.38px">Using interface enx6c1ff7186b8f</div>
<div class="tl" style="top:100.02px">Waiting for Link-UP on enx6c1ff7186b8f</div>
<div class="tl" style="top:119.66px">Could not bind TFTP socket: Address in use</div>
<div class="tl" style="top:139.30px">root@lmx:/home/luca/Downloads# systemctl stop tftpd-hpa</div>
<div class="tl" style="top:158.94px">root@lmx:/home/luca/Downloads# systemctl disable tftpd-hpa</div>
<div class="tl" style="top:178.58px">tftpd-hpa.service is not a native service, redirecting to systemd-sysv-install.</div>
<div class="tl" style="top:198.22px">Executing: /usr/lib/systemd/systemd-sysv-install disable tftpd-hpa</div>
<div class="tl" style="top:217.86px">root@lmx:/home/luca/Downloads# ./netinstall-cli -r -v -a 192.168.88.1 routeros-7.19.4-tile.npk</div>
<div class="tl" style="top:237.50px">Version: 7.19.4(2025-07-28 11:09:08)</div>
<div class="tl" style="top:257.14px">Will reset to default config</div>
<div class="tl" style="top:276.78px">Using interface enx6c1ff7186b8f</div>
<div class="tl" style="top:296.42px">Using interface enx6c1ff7186b8f</div>
<div class="tl" style="top:316.06px">Waiting for Link-UP on enx6c1ff7186b8f</div>
<div class="tl" style="top:335.70px">Waiting for RouterBOARD...</div>
<div class="tl" style="top:355.34px"></div>
<div class="tl" style="top:374.98px">Received a BOOTP request from D4:CA:6D:01:6E:F4 (tile)</div>
<div class="tl" style="top:394.62px">Assigned 192.168.88.1 to D4:CA:6D:01:6E:F4</div>
<div class="tl" style="top:414.26px">Booting device D4:CA:6D:01:6E:F4 into setup mode</div>
<div class="tl" style="top:433.90px">Received a BOOTP request from D4:CA:6D:01:6E:F4 (tile)</div>
<div class="tl" style="top:453.54px">Assigned 192.168.88.1 to D4:CA:6D:01:6E:F4</div>
<div class="tl" style="top:473.18px">Booting device D4:CA:6D:01:6E:F4 into setup mode</div>
<div class="abs" style="left:0.5px;top:488.5px;width:11px;height:21px;border:2px solid #dcdcdc"></div>
<div class="abs" style="left:1222px;top:374px;width:7px;height:133px;background:#8a8a8a;border-radius:4px"></div></div>
</body></html>
